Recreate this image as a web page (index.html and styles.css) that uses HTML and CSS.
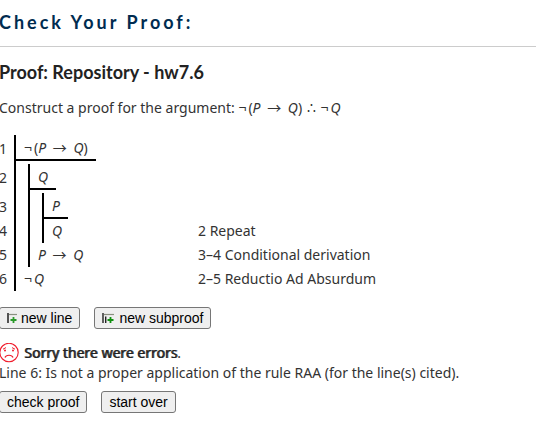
FILE: index.html
```
<!DOCTYPE html>
<html lang="en">
<head>
    <meta charset="UTF-8">
    <meta name="viewport" content="width=device-width, initial-scale=1.0">
    <title>Check Your Proof</title>
    <link rel="stylesheet" href="styles.css">
</head>
<body>
    <h2>Check Your Proof:</h2>

    <main>
        <h3>Proof: Repository - hw7.6</h3>
        <p class="problem">Construct a proof for the argument: <span class="not">¬</span>(<i>P</i> <span class="arrow">→</span> <i>Q</i>) <span class="therefore">∴</span> <span class="not">¬</span><i>Q</i></p>

        <table class="proof">
            <tr>
                <th scope="row">1</th>
                <td class="bar"><span class="formula premise"><span class="not">¬</span>(<i>P</i> <span class="arrow">→</span> <i>Q</i>)</span></td>
                <td class="rule"></td>
            </tr>
            <tr>
                <th scope="row">2</th>
                <td class="bar"><div class="sub first"><span class="formula premise"><i>Q</i></span></div></td>
                <td class="rule"></td>
            </tr>
            <tr>
                <th scope="row">3</th>
                <td class="bar"><div class="sub opening"><div class="sub"><span class="formula premise"><i>P</i></span></div></div></td>
                <td class="rule"></td>
            </tr>
            <tr>
                <th scope="row">4</th>
                <td class="bar"><div class="sub"><div class="sub"><span class="formula"><i>Q</i></span></div></div></td>
                <td class="rule">2 Repeat</td>
            </tr>
            <tr>
                <th scope="row">5</th>
                <td class="bar"><div class="sub"><span class="formula"><i>P</i> <span class="arrow">→</span> <i>Q</i></span></div></td>
                <td class="rule">3–4 Conditional derivation</td>
            </tr>
            <tr>
                <th scope="row">6</th>
                <td class="bar"><span class="formula"><span class="not">¬</span><i>Q</i></span></td>
                <td class="rule">2–5 Reductio Ad Absurdum</td>
            </tr>
        </table>

        <div class="buttons">
            <button type="button">
                <svg width="10" height="12" viewBox="0 0 10 12" fill="none" aria-hidden="true">
                    <path d="M1 1v10" stroke="#111" stroke-width="1.4"/>
                    <path d="M2 2.5h8" stroke="#8a9080" stroke-width="1.2"/>
                    <path d="M6.5 5v6M3.5 8h6" stroke="#2a9a2a" stroke-width="1.8"/>
                </svg>
                new line
            </button>
            <button type="button">
                <svg width="13" height="12" viewBox="0 0 13 12" fill="none" aria-hidden="true">
                    <path d="M1 1v10M3.7 4.5v6.5" stroke="#222" stroke-width="1.4"/>
                    <path d="M2 2.5h10" stroke="#8a9080" stroke-width="1.2"/>
                    <path d="M8.5 5v6M5.5 8h6" stroke="#109010" stroke-width="1.8"/>
                </svg>
                new subproof
            </button>
        </div>

        <div class="result">
            <div class="verdict">
                <svg width="20" height="20" viewBox="0 0 20 20" fill="none" stroke="#f01c2c" aria-hidden="true">
                    <circle cx="10" cy="9.5" r="9.2" stroke-width="1.1"/>
                    <path d="M4 6.2l3-1.6M16 6.2l-3-1.6" stroke-width="1"/>
                    <path d="M6 14.5c1-3 7-3 8 0" stroke-width="1.2"/>
                    <circle cx="6" cy="7.4" r="1" fill="#f01c2c" stroke="none"/>
                    <circle cx="14" cy="7.4" r="1" fill="#f01c2c" stroke="none"/>
                </svg>
                <span><strong>Sorry there were errors</strong>.</span>
            </div>
            <div>Line 6: Is not a proper application of the rule RAA (for the line(s) cited).</div>
        </div>

        <div class="buttons">
            <button type="button">check proof</button>
            <button type="button">start over</button>
        </div>
    </main>
</body>
</html>
```
FILE: styles.css
```
body {
    font-family: "Noto Sans", "Open Sans", sans-serif;
    font-size: 14px;
    line-height: 20px;
    color: #333;
    background-color: white;
    margin: 0;
}

h2 {
    font-family: Lato, sans-serif;
    font-size: 18px;
    font-weight: bold;
    line-height: 24px;
    letter-spacing: 3px;
    color: #002c50;
    margin: 0;
    padding: 10px 0 12px;
    border-bottom: 1px solid #ccc;
    text-indent: -1px;
}

main {
    margin-left: -1px;
}

h3 {
    font-family: Lato, sans-serif;
    font-size: 18px;
    font-weight: bold;
    line-height: 24px;
    color: #222;
    margin: 13px 0 14px;
}

.problem {
    margin: 0 0 17px;
}

.not {
    padding-right: 2px;
}

.arrow {
    font-family: "Noto Sans CJK JP", sans-serif;
    line-height: 1;
    padding: 0 3px;
}

.therefore {
    padding: 0 1px;
}

.proof {
    border-spacing: 0;
    line-height: 24px;
}

.proof th,
.proof td {
    padding: 0;
    font-weight: normal;
    text-align: left;
    vertical-align: bottom;
}

.proof th {
    width: 15px;
}

.proof .bar {
    border-left: 2px solid black;
    min-width: 160px;
}

.sub {
    margin-left: 12px;
    border-left: 2px solid black;
}

/* gap above the first line of a subproof */
.first {
    margin-top: 3px;
}

.opening {
    padding-top: 3px;
}

.formula {
    display: block;
    width: fit-content;
    padding: 0 8px;
}

.premise {
    line-height: 22px;
    padding-top: 2px;
    border-bottom: 2px solid black;
}

.proof .rule {
    padding-left: 22px;
}

.buttons {
    display: flex;
    gap: 14px;
    margin-top: 16px;
}

button {
    display: flex;
    align-items: center;
    gap: 4px;
    height: 22px;
    padding: 0 7px;
    font-family: "Liberation Sans", Arial, sans-serif;
    font-size: 14px;
    color: black;
    background-color: #efefef;
    border: 1px solid #767676;
    border-radius: 3px;
}

.result {
    margin-top: 14px;
}

.verdict {
    display: flex;
    align-items: center;
    gap: 5px;
}

.verdict strong {
    font-weight: normal;
    color: #222;
    text-shadow: 1px 0 #444;
}

.result + .buttons {
    margin-top: 8px;
}
```
